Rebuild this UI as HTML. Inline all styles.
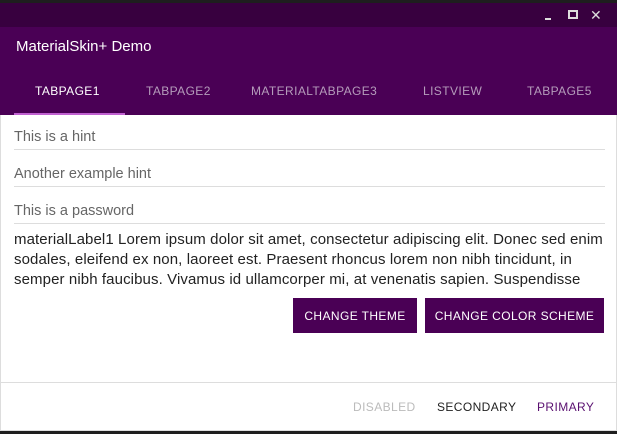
<!DOCTYPE html>
<html><head><style>
*{margin:0;padding:0;box-sizing:border-box}
body{width:617px;height:434px;background:#1e1e1e;font-family:"Liberation Sans",sans-serif;position:relative;overflow:hidden}
.win{position:absolute;left:0;top:3px;width:617px;height:428px;background:#fff;border:1px solid #ddd}
.tb{position:absolute;left:0;top:3px;width:617px;height:24px;background:#38003f}
.hd{position:absolute;left:0;top:27px;width:617px;height:88px;background:#4a0055}
.t{position:absolute;color:#fff;font-size:15px;letter-spacing:0px}
.tab{position:absolute;top:84px;font-size:12px;color:#b59cbb;letter-spacing:0.4px}
.ind{position:absolute;left:14px;top:113px;width:111px;height:2px;background:#c060d0}
.hint{position:absolute;left:14px;font-size:14.5px;color:#666;letter-spacing:0px}
.ln{position:absolute;left:14px;width:591px;height:1px;background:#ddd}
.p{position:absolute;left:14px;font-size:15px;color:#222;letter-spacing:0.1px;white-space:nowrap;line-height:20px}
.btn{position:absolute;top:298px;height:35px;background:#4a0055;color:#fff;font-size:12px;letter-spacing:0.4px;display:flex;align-items:center;justify-content:center}
.fb{position:absolute;top:400px;font-size:12px;letter-spacing:0.4px}
</style></head><body>
<div class="win"></div>
<div class="tb"></div>
<div class="hd"></div>
<div style="position:absolute;left:545px;top:18px;width:6px;height:2px;background:#ddd"></div>
<div style="position:absolute;left:568px;top:10px;width:10px;height:9px;border:2px solid #ddd"></div>
<div style="position:absolute;left:590px;top:7px;color:#ddd;font-size:14px">✕</div>
<div class="t" style="left:16px;top:38px">MaterialSkin+ Demo</div>
<div class="tab" style="left:35px;color:#fff">TABPAGE1</div>
<div class="tab" style="left:146px">TABPAGE2</div>
<div class="tab" style="left:251px">MATERIALTABPAGE3</div>
<div class="tab" style="left:423px">LISTVIEW</div>
<div class="tab" style="left:527px">TABPAGE5</div>
<div class="ind"></div>
<div class="hint" style="top:129px">This is a hint</div>
<div class="ln" style="top:149px"></div>
<div class="hint" style="top:166px">Another example hint</div>
<div class="ln" style="top:186px"></div>
<div class="hint" style="top:203px">This is a password</div>
<div class="ln" style="top:223px"></div>
<div class="p" style="top:230px">materialLabel1 Lorem ipsum dolor sit amet, consectetur adipiscing elit. Donec sed enim</div>
<div class="p" style="top:250px">sodales, eleifend ex non, laoreet est. Praesent rhoncus lorem non nibh tincidunt, in</div>
<div class="p" style="top:270px">semper nibh faucibus. Vivamus id ullamcorper mi, at venenatis sapien. Suspendisse</div>
<div class="btn" style="left:293px;width:124px">CHANGE THEME</div>
<div class="btn" style="left:425px;width:179px">CHANGE COLOR SCHEME</div>
<div style="position:absolute;left:0;top:382px;width:617px;height:1px;background:#ddd"></div>
<div class="fb" style="left:353px;color:#bbb">DISABLED</div>
<div class="fb" style="left:437px;color:#222">SECONDARY</div>
<div class="fb" style="left:537px;color:#5a1070">PRIMARY</div>
</body></html>
